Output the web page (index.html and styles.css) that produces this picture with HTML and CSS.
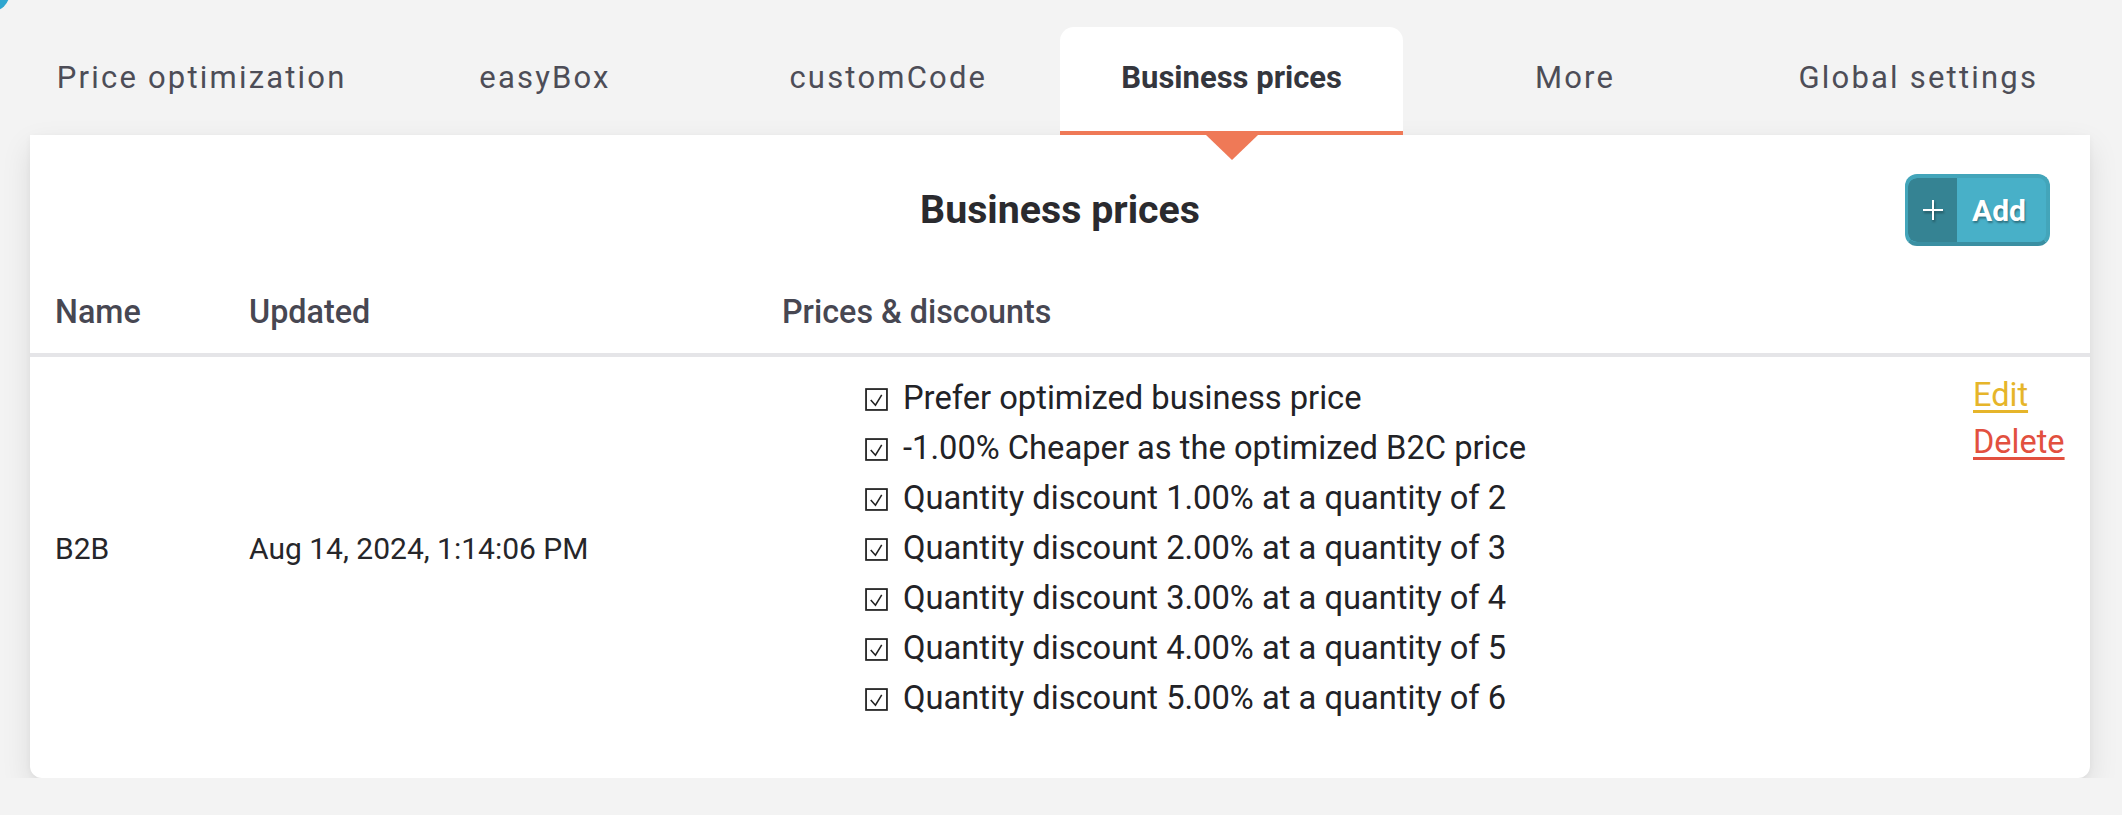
FILE: index.html
```html
<!DOCTYPE html>
<html lang="en">
<head>
<meta charset="utf-8">
<title>Business prices</title>
<link rel="stylesheet" href="styles.css">
</head>
<body>
<div class="corner-dot"></div>
<div class="page">
  <nav class="tabs">
    <a class="tab">Price optimization</a>
    <a class="tab">easyBox</a>
    <a class="tab">customCode</a>
    <a class="tab tab-active">Business prices</a>
    <a class="tab">More</a>
    <a class="tab">Global settings</a>
  </nav>
  <section class="card">
    <header class="card-header">
      <span></span>
      <h1 class="card-title">Business prices</h1>
      <button class="btn-add">
        <span class="btn-icon">
          <svg width="22" height="22" viewBox="0 0 22 22"><path d="M11 1v20M1 11h20" stroke="#fff" stroke-width="2"/></svg>
        </span>
        <span class="btn-label">Add</span>
      </button>
    </header>
    <table class="price-table">
      <colgroup>
        <col class="c-name"><col class="c-updated"><col class="c-prices"><col class="c-actions">
      </colgroup>
      <thead>
        <tr>
          <th class="first">Name</th>
          <th>Updated</th>
          <th>Prices &amp; discounts</th>
          <th></th>
        </tr>
      </thead>
      <tbody>
        <tr>
          <td class="first cell-text">B2B</td>
          <td class="cell-text">Aug 14, 2024, 1:14:06 PM</td>
          <td>
            <ul class="features">
              <li><svg class="chk" viewBox="0 0 22 22"><rect x="1" y="1" width="20" height="20" fill="none" stroke="#222" stroke-width="1.7"/><path d="M5.5 11.5l4.5 5 6-10" fill="none" stroke="#222" stroke-width="1.5"/></svg>Prefer optimized business price</li>
              <li><svg class="chk" viewBox="0 0 22 22"><rect x="1" y="1" width="20" height="20" fill="none" stroke="#222" stroke-width="1.7"/><path d="M5.5 11.5l4.5 5 6-10" fill="none" stroke="#222" stroke-width="1.5"/></svg>-1.00% Cheaper as the optimized B2C price</li>
              <li><svg class="chk" viewBox="0 0 22 22"><rect x="1" y="1" width="20" height="20" fill="none" stroke="#222" stroke-width="1.7"/><path d="M5.5 11.5l4.5 5 6-10" fill="none" stroke="#222" stroke-width="1.5"/></svg>Quantity discount 1.00% at a quantity of 2</li>
              <li><svg class="chk" viewBox="0 0 22 22"><rect x="1" y="1" width="20" height="20" fill="none" stroke="#222" stroke-width="1.7"/><path d="M5.5 11.5l4.5 5 6-10" fill="none" stroke="#222" stroke-width="1.5"/></svg>Quantity discount 2.00% at a quantity of 3</li>
              <li><svg class="chk" viewBox="0 0 22 22"><rect x="1" y="1" width="20" height="20" fill="none" stroke="#222" stroke-width="1.7"/><path d="M5.5 11.5l4.5 5 6-10" fill="none" stroke="#222" stroke-width="1.5"/></svg>Quantity discount 3.00% at a quantity of 4</li>
              <li><svg class="chk" viewBox="0 0 22 22"><rect x="1" y="1" width="20" height="20" fill="none" stroke="#222" stroke-width="1.7"/><path d="M5.5 11.5l4.5 5 6-10" fill="none" stroke="#222" stroke-width="1.5"/></svg>Quantity discount 4.00% at a quantity of 5</li>
              <li><svg class="chk" viewBox="0 0 22 22"><rect x="1" y="1" width="20" height="20" fill="none" stroke="#222" stroke-width="1.7"/><path d="M5.5 11.5l4.5 5 6-10" fill="none" stroke="#222" stroke-width="1.5"/></svg>Quantity discount 5.00% at a quantity of 6</li>
            </ul>
          </td>
          <td class="actions">
            <a class="link link-edit" href="#">Edit</a>
            <a class="link link-delete" href="#">Delete</a>
          </td>
        </tr>
      </tbody>
    </table>
  </section>
</div>
</body>
</html>
```
FILE: styles.css
```css
html, body {
  margin: 0;
  padding: 0;
}
body {
  background: #f3f3f3;
  font-family: Roboto, "Liberation Sans", sans-serif;
  color: #252529;
  overflow: hidden;
}
.corner-dot {
  position: absolute;
  left: -30px;
  top: -28px;
  width: 40px;
  height: 40px;
  border-radius: 50%;
  background: #2fa6cf;
}
.page {
  margin: 0 32px 0 30px;
  padding-top: 27px;
}

/* tabs */
.tabs {
  display: grid;
  grid-template-columns: repeat(6, 1fr);
}
.tab {
  position: relative;
  height: 108px;
  box-sizing: border-box;
  padding-bottom: 3px;
  border-bottom: 4px solid transparent;
  display: flex;
  align-items: center;
  justify-content: center;
  font-size: 31px;
  font-weight: 400;
  letter-spacing: 2.2px;
  color: #4d4d57;
  white-space: nowrap;
}
.tab-active {
  background: #fff;
  border-radius: 14px 14px 0 0;
  border-bottom-color: #ef7957;
  font-weight: 700;
  letter-spacing: 0;
  color: #34363d;
}
.tab-active::after {
  content: "";
  position: absolute;
  left: 50%;
  top: 100%;
  margin-left: -26px;
  margin-top: 4px;
  border-left: 26px solid transparent;
  border-right: 26px solid transparent;
  border-top: 25px solid #ef7957;
  z-index: 2;
}

/* card */
.card {
  background: #fff;
  border-radius: 0 0 12px 12px;
  box-shadow: 0 12px 30px rgba(0, 0, 0, 0.1), 0 2px 6px rgba(0, 0, 0, 0.04);
  padding-bottom: 39px;
}
.card-header {
  height: 150px;
  display: grid;
  grid-template-columns: 1fr auto 1fr;
  align-items: center;
  padding: 0 40px;
}
.card-title {
  margin: 0;
  font-size: 39.3px;
  font-weight: 700;
  color: #2a2a2e;
}
.btn-add {
  justify-self: end;
  width: 145px;
  height: 72px;
  box-sizing: border-box;
  padding: 0;
  display: flex;
  align-items: stretch;
  background: #48b0c8;
  border: 4px solid #43a5ba;
  border-left-width: 3px;
  border-bottom-color: #3a8fa2;
  border-radius: 12px;
  font-family: Roboto, "Liberation Sans", sans-serif;
  cursor: pointer;
  overflow: hidden;
}
.btn-icon {
  width: 49px;
  background: #358393;
  border-radius: 9px 0 0 9px;
  display: flex;
  align-items: center;
  justify-content: center;
}
.btn-icon svg {
  filter: drop-shadow(1px 2px 1px rgba(0, 0, 0, 0.35));
}
.btn-label {
  flex: 1;
  display: flex;
  align-items: center;
  padding-left: 15px;
  font-size: 30px;
  font-weight: 700;
  color: #fff;
  text-shadow: 1px 2px 2px rgba(0, 0, 0, 0.35);
}

/* table */
.price-table {
  width: 100%;
  border-collapse: collapse;
  table-layout: fixed;
}
.c-name { width: 219px; }
.c-updated { width: 533px; }
.c-prices { width: 1191px; }
.c-actions { width: 117px; }
.price-table th {
  text-align: left;
  font-size: 32.3px;
  font-weight: 500;
  color: #474752;
  line-height: 38px;
  padding: 8px 0 22px;
  border-bottom: 4px solid #e5e5e8;
  white-space: nowrap;
}
.price-table td {
  padding: 0;
  vertical-align: middle;
}
.price-table .first {
  padding-left: 25px;
}
.cell-text {
  font-size: 30px;
  color: #26262a;
  white-space: nowrap;
}
.features {
  list-style: none;
  margin: 16px 0;
  padding-left: 83px;
}
.features li {
  font-size: 32.7px;
  line-height: 50px;
  color: #222226;
  white-space: nowrap;
}
.chk {
  width: 23px;
  height: 23px;
  margin-right: 15px;
  vertical-align: -2px;
}
.price-table td.actions {
  vertical-align: top;
  padding-top: 15px;
}
.link {
  display: block;
  width: max-content;
  font-size: 32.5px;
  line-height: 47px;
  text-decoration: underline;
  text-decoration-thickness: 3px;
  text-underline-offset: 4px;
}
.link-edit { color: #e6b52a; }
.link-delete { color: #e2503f; }
```
